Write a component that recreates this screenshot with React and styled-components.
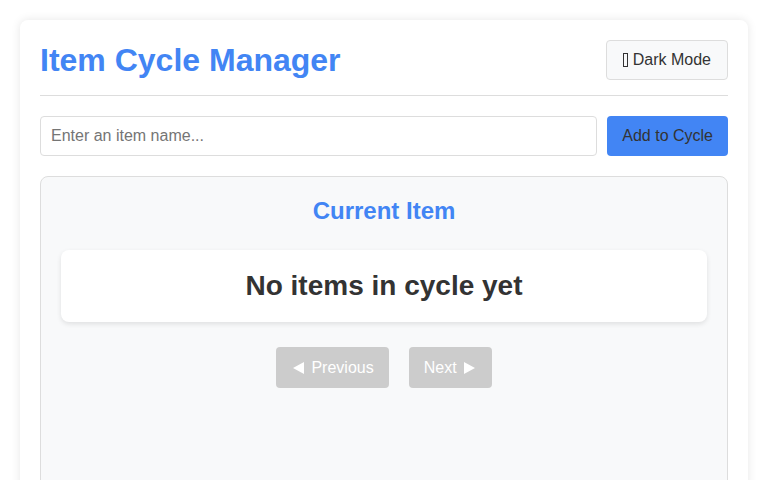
import React, { useState } from "react";
import styled, { createGlobalStyle } from "styled-components";

const Global = createGlobalStyle`
  html, body { margin: 0; padding: 0; background: #ffffff; }
  body { font-family: "Liberation Sans", Arial, sans-serif; color: #333; }
  * { box-sizing: border-box; }
`;

const Page = styled.div`
  padding: 20px;
`;

const Card = styled.div`
  background: #fff;
  border-radius: 8px;
  box-shadow: 0 0 10px rgba(0, 0, 0, 0.1);
  padding: 20px;
`;

const Header = styled.header`
  display: flex;
  justify-content: space-between;
  align-items: center;
  padding-bottom: 15px;
  border-bottom: 1px solid #ddd;
  margin-bottom: 20px;
`;

const Title = styled.h1`
  margin: 0;
  font-size: 32px;
  font-weight: bold;
  color: #4285f4;
`;

const Button = styled.button`
  display: inline-flex;
  align-items: center;
  gap: ${(p) => p.$gap || 0}px;
  font-family: "Liberation Sans", Arial, sans-serif;
  font-size: 16px;
  height: ${(p) => p.$h || 40}px;
  padding: 0 ${(p) => p.$px || 15}px;
  border-radius: 4px;
  cursor: pointer;
  border: ${(p) => (p.$variant === "light" ? "1px solid #ddd" : "none")};
  background: ${(p) =>
    p.$variant === "light" ? "#f8f9fa" : p.$variant === "primary" ? "#4285f4" : "#cccccc"};
  color: ${(p) => (p.$variant === "muted" ? "#fff" : "#333")};
  white-space: nowrap;
`;

const Tofu = styled.span`
  display: inline-block;
  width: 5px;
  height: 14px;
  border: 1px solid #333;
  margin-right: 5px;
`;

const ArrowSvg = styled.svg`
  display: block;
  flex: none;
`;

function Triangle({ dir }) {
  return (
    <ArrowSvg width="16" height="16" viewBox="0 0 16 16" aria-hidden="true">
      {dir === "left" ? (
        <polygon points="2,8 13,2 13,14" fill="currentColor" />
      ) : (
        <polygon points="14,8 3,2 3,14" fill="currentColor" />
      )}
    </ArrowSvg>
  );
}

const InputRow = styled.div`
  display: flex;
  gap: 10px;
  margin-bottom: 20px;
`;

const Input = styled.input`
  flex: 1;
  height: 40px;
  padding: 0 10px;
  border: 1px solid #ddd;
  border-radius: 4px;
  font-family: "Liberation Sans", Arial, sans-serif;
  font-size: 16px;
  color: #333;
  &::placeholder { color: #757575; }
`;

const Panel = styled.section`
  background: #f8f9fa;
  border: 1px solid #ddd;
  border-radius: 8px;
  padding: 20px;
  min-height: 400px;
`;

const PanelTitle = styled.h2`
  margin: 0 0 25px;
  text-align: center;
  font-size: 24px;
  line-height: 28px;
  color: #4285f4;
`;

const ItemBox = styled.div`
  background: #fff;
  border-radius: 8px;
  box-shadow: 0 2px 5px rgba(0, 0, 0, 0.1);
  padding: 20px;
  text-align: center;
  font-size: 28px;
  line-height: 32px;
  font-weight: bold;
  color: #333;
  margin-bottom: 25px;
`;

const Controls = styled.div`
  display: flex;
  justify-content: center;
  gap: 20px;
`;

export default function App() {
  const [name, setName] = useState("");
  return (
    <>
      <Global />
      <Page>
        <Card>
          <Header>
            <Title>Item Cycle Manager</Title>
            <Button $variant="light" $px={16} aria-label="🌙 Dark Mode">
              <Tofu title="🌙" />
              Dark Mode
            </Button>
          </Header>
          <InputRow>
            <Input
              placeholder="Enter an item name..."
              value={name}
              onChange={(e) => setName(e.target.value)}
            />
            <Button $variant="primary" $px={15}>Add to Cycle</Button>
          </InputRow>
          <Panel>
            <PanelTitle>Current Item</PanelTitle>
            <ItemBox>No items in cycle yet</ItemBox>
            <Controls>
              <Button $variant="muted" $h={41} $gap={4} disabled>
                <Triangle dir="left" />
                Previous
              </Button>
              <Button $variant="muted" $h={41} $gap={4} disabled>
                Next
                <Triangle dir="right" />
              </Button>
            </Controls>
          </Panel>
        </Card>
      </Page>
    </>
  );
}
